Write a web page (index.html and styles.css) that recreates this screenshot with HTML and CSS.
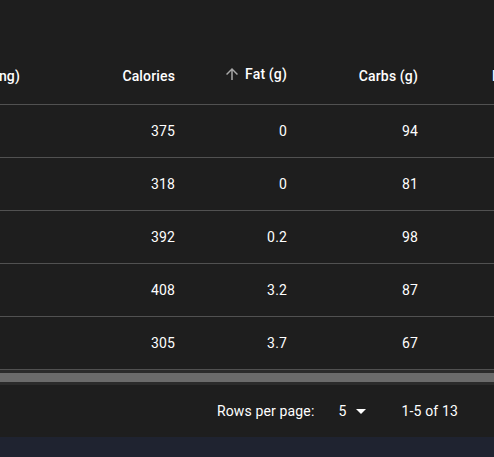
FILE: index.html
```html
<!DOCTYPE html>
<html>
<head>
<meta charset="utf-8">
<link rel="stylesheet" href="styles.css">
</head>
<body>
<div class="paper">
  <div class="scroller">
    <table class="grid">
      <thead>
        <tr>
          <th class="c1">Dessert (100g serving)</th>
          <th class="c2">Calories</th>
          <th class="c3"><span class="sort"><svg class="arrow" viewBox="0 0 24 24" width="18" height="18"><path d="M4 12l1.41 1.41L11 7.83V20h2V7.83l5.58 5.59L20 12l-8-8-8 8z"/></svg>Fat&nbsp;(g)</span></th>
          <th class="c4">Carbs (g)</th>
          <th class="c5">Protein (g)</th>
        </tr>
      </thead>
      <tbody>
        <tr><td class="c1"></td><td>375</td><td>0</td><td>94</td><td>0</td></tr>
        <tr><td class="c1"></td><td>318</td><td>0</td><td>81</td><td>2</td></tr>
        <tr><td class="c1"></td><td>392</td><td>0.2</td><td>98</td><td>0</td></tr>
        <tr><td class="c1"></td><td>408</td><td>3.2</td><td>87</td><td>6.5</td></tr>
        <tr><td class="c1"></td><td>305</td><td>3.7</td><td>67</td><td>4.3</td></tr>
      </tbody>
    </table>
  </div>
  <div class="hscroll"><div class="thumb"></div></div>
  <div class="pagination">
    <span class="label">Rows per page:</span>
    <span class="select">5<svg class="drop" viewBox="0 0 24 24" width="24" height="24"><path d="M7 10l5 5 5-5z"/></svg></span>
    <span class="range">1-5 of 13</span>
  </div>
</div>
<div class="strip"></div>
</body>
</html>
```
FILE: styles.css
```css
html, body {
  margin: 0;
  padding: 0;
  background: #1e1e1e;
  font-family: Roboto, "Liberation Sans", Arial, sans-serif;
  color: #ffffff;
  font-size: 14px;
  overflow: hidden;
}

.paper {
  background: #1e1e1e;
  height: 437px;
  display: flex;
  flex-direction: column;
}

.scroller {
  overflow: hidden;
  padding-top: 48px;
}

.grid {
  border-collapse: collapse;
  table-layout: fixed;
  margin-left: -164px;
  width: 744px;
}

.grid th,
.grid td {
  padding: 0 16px;
  text-align: right;
  border-bottom: 1px solid #515151;
  white-space: nowrap;
  overflow: hidden;
  letter-spacing: 0.01071em;
}

.grid th {
  height: 56px;
  font-weight: 500;
  line-height: 24px;
}

.grid td {
  height: 52px;
  font-weight: 400;
  line-height: 20px;
}

.grid .c1 { width: 168px; }
.grid .c2 { width: 123px; }
.grid .c3 { width: 80px; }
.grid .c4 { width: 99px; }
.grid .c5 { width: 110px; padding-right: 20px; }

.sort {
  display: inline-flex;
  align-items: center;
}

.arrow {
  fill: #a9a9a9;
  margin: 0 4px 0 5px;
}

.hscroll {
  height: 15px;
  background: #2b2b2b;
  display: flex;
  align-items: center;
}

.thumb {
  height: 9px;
  width: 100%;
  background: #6b6b6b;
}

.pagination {
  height: 52px;
  display: flex;
  align-items: center;
  justify-content: flex-end;
  padding-right: 36px;
  letter-spacing: 0.01071em;
}

.label {
  margin-right: 24px;
}

.select {
  display: inline-flex;
  align-items: center;
  margin-right: 29px;
}

.drop {
  fill: #ffffff;
  margin-left: 2px;
}

.range {
  white-space: nowrap;
}

.strip {
  height: 20px;
  background: #1f2330;
}
```
